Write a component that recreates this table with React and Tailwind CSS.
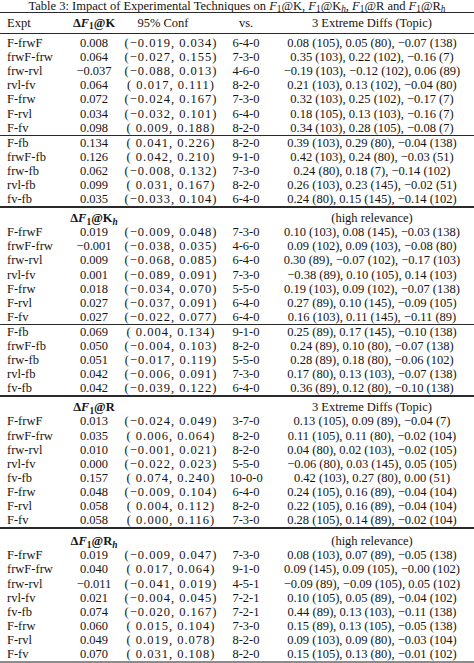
import React from "react";

const M = "\u2212";

const sections = [
  {
    key: "K",
    label: "K",
    sub: null,
    right: null,
    groups: [
      [
        ["F-frwF", "0.008", ["−0.019", "0.034"], "6-4-0", "0.08 (105), 0.05 (80), −0.07 (138)"],
        ["frwF-frw", "0.064", ["−0.027", "0.155"], "7-3-0", "0.35 (103), 0.22 (102), −0.16 (7)"],
        ["frw-rvl", "−0.037", ["−0.088", "0.013"], "4-6-0", "−0.19 (103), −0.12 (102), 0.06 (89)"],
        ["rvl-fv", "0.064", ["0.017", "0.111"], "8-2-0", "0.21 (103), 0.13 (102), −0.04 (80)"],
        ["F-frw", "0.072", ["−0.024", "0.167"], "7-3-0", "0.32 (103), 0.25 (102), −0.17 (7)"],
        ["F-rvl", "0.034", ["−0.032", "0.101"], "6-4-0", "0.18 (105), 0.13 (103), −0.16 (7)"],
        ["F-fv", "0.098", ["0.009", "0.188"], "8-2-0", "0.34 (103), 0.28 (105), −0.08 (7)"],
      ],
      [
        ["F-fb", "0.134", ["0.041", "0.226"], "8-2-0", "0.39 (103), 0.29 (80), −0.04 (138)"],
        ["frwF-fb", "0.126", ["0.042", "0.210"], "9-1-0", "0.42 (103), 0.24 (80), −0.03 (51)"],
        ["frw-fb", "0.062", ["−0.008", "0.132"], "7-3-0", "0.24 (80), 0.18 (7), −0.14 (102)"],
        ["rvl-fb", "0.099", ["0.031", "0.167"], "8-2-0", "0.26 (103), 0.23 (145), −0.02 (51)"],
        ["fv-fb", "0.035", ["−0.033", "0.104"], "6-4-0", "0.24 (80), 0.15 (145), −0.14 (102)"],
      ],
    ],
  },
  {
    key: "Kh",
    label: "K",
    sub: "h",
    right: "(high relevance)",
    gap: "h-[3px]",
    groups: [
      [
        ["F-frwF", "0.019", ["−0.009", "0.048"], "7-3-0", "0.10 (103), 0.08 (145), −0.03 (138)"],
        ["frwF-frw", "−0.001", ["−0.038", "0.035"], "4-6-0", "0.09 (102), 0.09 (103), −0.08 (80)"],
        ["frw-rvl", "0.009", ["−0.068", "0.085"], "6-4-0", "0.30 (89), −0.07 (102), −0.17 (103)"],
        ["rvl-fv", "0.001", ["−0.089", "0.091"], "7-3-0", "−0.38 (89), 0.10 (105), 0.14 (103)"],
        ["F-frw", "0.018", ["−0.034", "0.070"], "5-5-0", "0.19 (103), 0.09 (102), −0.07 (138)"],
        ["F-rvl", "0.027", ["−0.037", "0.091"], "6-4-0", "0.27 (89), 0.10 (145), −0.09 (105)"],
        ["F-fv", "0.027", ["−0.022", "0.077"], "6-4-0", "0.16 (103), 0.11 (145), −0.11 (89)"],
      ],
      [
        ["F-fb", "0.069", ["0.004", "0.134"], "9-1-0", "0.25 (89), 0.17 (145), −0.10 (138)"],
        ["frwF-fb", "0.050", ["−0.004", "0.103"], "8-2-0", "0.24 (89), 0.10 (80), −0.07 (138)"],
        ["frw-fb", "0.051", ["−0.017", "0.119"], "5-5-0", "0.28 (89), 0.18 (80), −0.06 (102)"],
        ["rvl-fb", "0.042", ["−0.006", "0.091"], "7-3-0", "0.17 (80), 0.13 (103), −0.07 (138)"],
        ["fv-fb", "0.042", ["−0.039", "0.122"], "6-4-0", "0.36 (89), 0.12 (80), −0.10 (138)"],
      ],
    ],
  },
  {
    key: "R",
    label: "R",
    sub: null,
    right: "3 Extreme Diffs (Topic)",
    gap: "h-[3px]",
    groups: [
      [
        ["F-frwF", "0.013", ["−0.024", "0.049"], "3-7-0", "0.13 (105), 0.09 (89), −0.04 (7)"],
        ["frwF-frw", "0.035", ["0.006", "0.064"], "8-2-0", "0.11 (105), 0.11 (80), −0.02 (104)"],
        ["frw-rvl", "0.010", ["−0.001", "0.021"], "8-2-0", "0.04 (80), 0.02 (103), −0.02 (105)"],
        ["rvl-fv", "0.000", ["−0.022", "0.023"], "5-5-0", "−0.06 (80), 0.03 (145), 0.05 (105)"],
        ["fv-fb", "0.157", ["0.074", "0.240"], "10-0-0", "0.42 (103), 0.27 (80), 0.00 (51)"],
        ["F-frw", "0.048", ["−0.009", "0.104"], "6-4-0", "0.24 (105), 0.16 (89), −0.04 (104)"],
        ["F-rvl", "0.058", ["0.004", "0.112"], "8-2-0", "0.22 (105), 0.16 (89), −0.04 (104)"],
        ["F-fv", "0.058", ["0.000", "0.116"], "7-3-0", "0.28 (105), 0.14 (89), −0.02 (104)"],
      ],
    ],
  },
  {
    key: "Rh",
    label: "R",
    sub: "h",
    right: "(high relevance)",
    gap: "h-[5px]",
    groups: [
      [
        ["F-frwF", "0.019", ["−0.009", "0.047"], "7-3-0", "0.08 (103), 0.07 (89), −0.05 (138)"],
        ["frwF-frw", "0.040", ["0.017", "0.064"], "9-1-0", "0.09 (145), 0.09 (105), −0.00 (102)"],
        ["frw-rvl", "−0.011", ["−0.041", "0.019"], "4-5-1", "−0.09 (89), −0.09 (105), 0.05 (102)"],
        ["rvl-fv", "0.021", ["−0.004", "0.045"], "7-2-1", "0.10 (105), 0.05 (89), −0.04 (102)"],
        ["fv-fb", "0.074", ["−0.020", "0.167"], "7-2-1", "0.44 (89), 0.13 (103), −0.11 (138)"],
        ["F-frw", "0.060", ["0.015", "0.104"], "7-3-0", "0.15 (89), 0.13 (105), −0.05 (138)"],
        ["F-rvl", "0.049", ["0.019", "0.078"], "8-2-0", "0.09 (103), 0.09 (80), −0.03 (104)"],
        ["F-fv", "0.070", ["0.031", "0.108"], "8-2-0", "0.15 (105), 0.13 (80), −0.01 (102)"],
      ],
    ],
  },
];

function F1({ label, sub }) {
  return (
    <span>
      <i>F</i>
      <sub>1</sub>@{label}
      {sub && <sub><i>{sub}</i></sub>}
    </span>
  );
}

function Delta({ label, sub }) {
  return (
    <span className="font-bold">
      Δ<F1 label={label} sub={sub} />
    </span>
  );
}

function Row({ cells }) {
  const [expt, d, conf, vs, diffs] = cells;
  const lo = conf[0].startsWith(M) ? conf[0] : "\u00a0" + conf[0];
  return (
    <div className="flex items-center h-[14.1px] shrink-0 leading-[14px] whitespace-pre">
      <div className="w-[68px] pl-[7px]">{expt}</div>
      <div className="w-[52px] text-center">{d}</div>
      <div className="w-[102px] text-center tracking-[1px]">({lo}, {conf[1]})</div>
      <div className="w-[48px] text-center">{vs}</div>
      <div className="flex-1 text-center">{diffs}</div>
    </div>
  );
}

export default function App() {
  return (
    <div
      className="w-[474px] h-[663px] overflow-hidden bg-white text-[#141414] text-[12.5px] flex flex-col"
      style={{ fontFamily: '"Liberation Serif", serif' }}
    >
      <div className="h-[12px] shrink-0 leading-[12px] text-center whitespace-nowrap">
        Table 3: Impact of Experimental Techniques on <F1 label="K" />, <F1 label="K" sub="h" />,{" "}
        <F1 label="R" /> and <F1 label="R" sub="h" />
      </div>
      <div className="border-t border-[#2a2a2a]" />
      <div className="flex items-center h-[20px] shrink-0">
        <div className="w-[68px] pl-[7px]">Expt</div>
        <div className="w-[52px] text-center">
          <Delta label="K" />
        </div>
        <div className="w-[102px] text-center pr-[16px]">95% Conf</div>
        <div className="w-[48px] text-center">vs.</div>
        <div className="flex-1 text-center">3 Extreme Diffs (Topic)</div>
      </div>
      <div className="border-t border-[#2a2a2a]" />
      <div className="h-[2px] shrink-0" />
      {sections.map((s, si) => (
        <div key={s.key} className="flex flex-col shrink-0">
          {s.gap && <div className={`${s.gap} shrink-0`} />}
          {s.right && (
            <div className="flex items-center h-[14.1px] shrink-0 leading-[14px]">
              <div className="w-[68px]" />
              <div className="w-[52px] text-center">
                <Delta label={s.label} sub={s.sub} />
              </div>
              <div className="w-[150px]" />
              <div className="flex-1 text-center">{s.right}</div>
            </div>
          )}
          {s.groups.map((g, gi) => (
            <div key={gi} className="flex flex-col shrink-0">
              {g.map((r, ri) => (
                <Row key={ri} cells={r} />
              ))}
              {gi < s.groups.length - 1 && <div className="border-t border-[#2a2a2a]" />}
            </div>
          ))}
          {si < sections.length - 1 ? (
            <div className="border-t-2 border-[#2a2a2a]" />
          ) : (
            <div className="h-[3px] shrink-0 bg-[#8c8c8c]" />
          )}
        </div>
      ))}
    </div>
  );
}
